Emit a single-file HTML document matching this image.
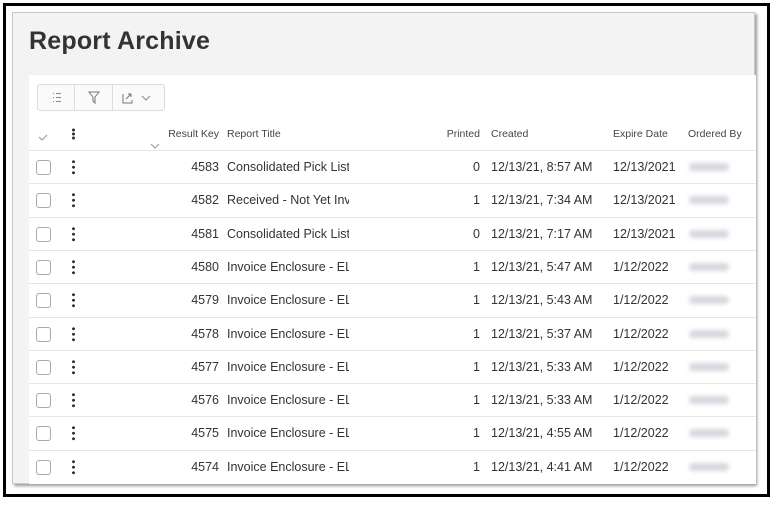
<!DOCTYPE html>
<html><head><style>
*{margin:0;padding:0;box-sizing:border-box}
body{width:776px;height:505px;background:#fff;font-family:"Liberation Sans",sans-serif;position:relative;overflow:hidden}
.frame{position:absolute;left:3px;top:3px;width:767px;height:494px;border:3px solid #000;background:#fff}
.page{position:absolute;left:12px;top:12px;width:743px;height:472px;background:#f3f3f3;border:1px solid #c8c8c8;box-shadow:2px 2px 3px #999}
h1{position:absolute;left:16px;top:14px;font-size:25px;font-weight:bold;color:#333;letter-spacing:0.2px}
.card{position:absolute;left:16px;top:62px;width:727px;height:409px;background:#fff}
.tb{position:absolute;left:8px;top:9px;width:128px;height:27px;border:1px solid #ddd;border-radius:3px;background:#fafafa}
.tb div{position:absolute;top:0;height:25px;border-right:1px solid #ddd}
.row{position:absolute;left:0;width:727px;height:33px;border-top:1px solid #e6e6e6;font-size:12.5px;color:#333}
.row span,.hd span{position:absolute;top:9px;white-space:nowrap}
.hd{position:absolute;left:0;top:49px;width:727px;height:28px;font-size:10.5px;color:#444}
.hd span{top:4px}
.cb{position:absolute;left:7px;top:9px;width:15px;height:15px;border:1px solid #aaa;border-radius:3px}
.dots{position:absolute;left:43px;top:8px;width:3px;height:16px;background:radial-gradient(circle,#333 1.4px,transparent 1.6px) 0 0/3px 5.5px repeat-y}
.blur{position:absolute;left:660px;top:12px;width:40px;height:8px;background:#d5d8de;filter:blur(2px);border-radius:4px}
</style></head><body>
<div class="frame"></div>
<div class="page">
<h1>Report Archive</h1>
<div class="card">
<div class="tb">
<div style="left:0;width:37px"><svg width="37" height="25"><g stroke="#888" stroke-width="1"><line x1="15" y1="8.5" x2="16" y2="8.5"/><line x1="18" y1="8.5" x2="23" y2="8.5"/><line x1="15" y1="12.5" x2="16" y2="12.5"/><line x1="18" y1="12.5" x2="23" y2="12.5"/><line x1="15" y1="16.5" x2="16" y2="16.5"/><line x1="18" y1="16.5" x2="23" y2="16.5"/></g></svg></div>
<div style="left:37px;width:38px"><svg width="38" height="25"><path d="M14 7h10l-4 5v6l-2-2v-4z" fill="none" stroke="#777"/></svg></div>
<div style="left:75px;width:52px;border:none"><svg width="52" height="25"><path d="M10 9v9h9v-3M13 14l5-5M15 9h3v3" fill="none" stroke="#777"/><path d="M29 11l4 4 4-4" fill="none" stroke="#888"/></svg></div>
</div>
<div class="hd">
<svg style="position:absolute;left:9px;top:9px" width="10" height="8"><path d="M1 4l3 3 5-5" fill="none" stroke="#999"/></svg>
<div class="dots" style="top:4px;height:12px;background-size:3px 4px"></div>
<span style="right:537px">Result Key</span>
<svg style="position:absolute;left:121px;top:19px" width="10" height="6"><path d="M1 1l4 4 4-4" fill="none" stroke="#999"/></svg>
<span style="left:198px">Report Title</span>
<span style="right:276px">Printed</span>
<span style="left:462px">Created</span>
<span style="left:584px">Expire Date</span>
<span style="left:659px">Ordered By</span>
</div>
<div id="rows"></div>
</div>
</div>
<script>
var d=[["4583","Consolidated Pick List","0","12/13/21, 8:57 AM","12/13/2021"],["4582","Received - Not Yet Inv","1","12/13/21, 7:34 AM","12/13/2021"],["4581","Consolidated Pick List","0","12/13/21, 7:17 AM","12/13/2021"],["4580","Invoice Enclosure - EL","1","12/13/21, 5:47 AM","1/12/2022"],["4579","Invoice Enclosure - EL","1","12/13/21, 5:43 AM","1/12/2022"],["4578","Invoice Enclosure - EL","1","12/13/21, 5:37 AM","1/12/2022"],["4577","Invoice Enclosure - EL","1","12/13/21, 5:33 AM","1/12/2022"],["4576","Invoice Enclosure - EL","1","12/13/21, 5:33 AM","1/12/2022"],["4575","Invoice Enclosure - EL","1","12/13/21, 4:55 AM","1/12/2022"],["4574","Invoice Enclosure - EL","1","12/13/21, 4:41 AM","1/12/2022"]];
var h="";d.forEach(function(r,i){h+='<div class="row" style="top:'+(75+i*33.3)+'px"><div class="cb"></div><div class="dots"></div><span style="right:537px">'+r[0]+'</span><span style="left:198px;width:122px;overflow:hidden">'+r[1]+'</span><span style="right:276px">'+r[2]+'</span><span style="left:462px">'+r[3]+'</span><span style="left:584px">'+r[4]+'</span><div class="blur"></div></div>'});
document.getElementById("rows").innerHTML=h;
</script>
</body></html>
